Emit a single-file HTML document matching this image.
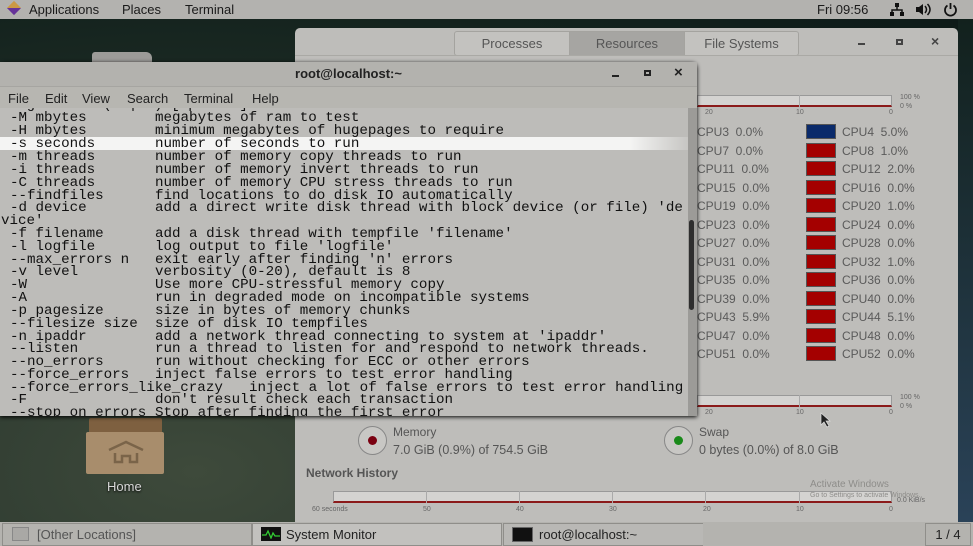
<!DOCTYPE html>
<html><head><meta charset="utf-8"><style>
*{margin:0;padding:0;box-sizing:border-box}
body{width:973px;height:546px;overflow:hidden;position:relative;background:#15251f;font-family:"Liberation Sans",sans-serif}
.a{position:absolute}
#top{left:0;top:0;width:973px;height:19px;background:#b3b2af;font-size:13px;color:#1a1a1a}
#top span{position:absolute;top:2px}
#desk{left:0;top:19px;width:973px;height:503px;background:radial-gradient(ellipse at 20% 90%,#3e4a3b 0%,#27342c 40%,#13221d 75%,#0d1a18 100%)}
#sm{left:295px;top:28px;width:663px;height:494px;background:#bebdba;border-radius:5px 5px 0 0}
.tab{position:absolute;top:3px;height:25px;border:1px solid #a4a39f;font-size:13px;color:#555;text-align:center;line-height:23px;background:#c3c2bf}
.lbl{font-size:12px;color:#5a5a5a;position:absolute}
.sm8{font-size:7px;color:#666;position:absolute}
.box{position:absolute;left:806px;width:30px;height:15px;background:#a40000;border:1px solid #555}
#term{left:0;top:62px;width:697px;height:354px;background:#bdbcb9;border-radius:5px 5px 0 0;box-shadow:0 1px 4px #000}
#tt{height:25px;background:#b3b2ae;font-size:13px;font-weight:bold;text-align:center;line-height:24px;color:#222;border-bottom:1px solid #a6a5a1}
#mn{height:21px;background:#b7b6b1;font-size:13px;color:#222}
#mn span{position:absolute;top:29px}
#txt{position:absolute;left:0;top:46px;width:688px;height:308px;overflow:hidden;background:#bdbcb9;font-family:"Liberation Mono",monospace;font-size:14.2px;color:#111}
#txt div{position:absolute;height:13px;line-height:13px;white-space:pre;left:0;width:700px}
#txt b{font-weight:normal;position:absolute;left:10px;top:0}
#txt i{font-style:normal;position:absolute;left:155px;top:0}
#hl{position:absolute;left:0;top:29px;width:435px;height:14px;background:linear-gradient(90deg,#f4f4f3 0%,#f4f4f3 90%,rgba(244,244,243,0) 100%)}
#task{left:0;top:522px;width:973px;height:24px;background:#b4b3af}
.tb{position:absolute;top:1px;height:23px;border:1px solid #8f8e8a;font-size:13px;color:#222;line-height:21px}
</style></head><body>
<div id="top" class="a">
<span style="left:9px;top:3px;width:10px;height:10px;background:linear-gradient(135deg,#c94 0 50%,#639 50%);transform:rotate(45deg);"></span>
<span style="left:29px">Applications</span><span style="left:122px">Places</span><span style="left:185px">Terminal</span>
<span style="left:817px">Fri 09:56</span>
<svg class="a" style="left:890px;top:3px" width="14" height="13"><rect x="5" y="0" width="4" height="4" fill="#111"/><rect x="0" y="9" width="4" height="4" fill="#111"/><rect x="10" y="9" width="4" height="4" fill="#111"/><path d="M7 4v3M2 9V7h10v2" stroke="#111" stroke-width="1.5" fill="none"/></svg>
<svg class="a" style="left:916px;top:3px" width="16" height="13"><path d="M0 4h3l4-3v11l-4-3H0z" fill="#111"/><path d="M9 3q3 3.5 0 7M11.5 1q5 5.5 0 11" stroke="#111" stroke-width="1.5" fill="none"/></svg>
<svg class="a" style="left:943px;top:2px" width="15" height="15"><path d="M4.5 3.5a5.5 5.5 0 1 0 6 0" stroke="#111" stroke-width="1.8" fill="none"/><path d="M7.5 1v6" stroke="#111" stroke-width="1.8"/></svg>
</div>
<div id="desk" class="a"></div>
<div class="a" style="left:92px;top:52px;width:60px;height:12px;background:#9c9b98;border-radius:3px 6px 0 0"></div>
<div class="a" style="left:958px;top:19px;width:15px;height:503px;background:linear-gradient(#12211d,#2a4258)"></div>
<div class="a" style="left:89px;top:418px;width:73px;height:20px;background:#7e6040;border-radius:2px"></div>
<div class="a" style="left:86px;top:432px;width:78px;height:42px;background:#a88d6c;border-radius:2px"></div>
<svg class="a" style="left:106px;top:440px" width="40" height="25"><path d="M3 10L20 2 37 10M9 13v9h7v-6h8v6h7v-9" stroke="#7a6449" stroke-width="2.5" fill="none"/></svg>
<div class="a" style="left:107px;top:479px;font-size:13px;color:#d8d8d8;text-shadow:0 1px 2px #000">Home</div>

<div id="sm" class="a">
<div class="tab" style="left:159px;width:116px;border-radius:3px 0 0 3px">Processes</div>
<div class="tab" style="left:274px;width:116px;background:#a6a5a2">Resources</div>
<div class="tab" style="left:389px;width:115px;border-radius:0 3px 3px 0">File Systems</div>
<div class="a" style="left:563px;top:15px;width:7px;height:2px;background:#444"></div>
<div class="a" style="left:601px;top:11px;width:7px;height:6px;border:2px solid #444"></div>
<div class="a" style="left:636px;top:5px;font-size:14px;color:#444;font-weight:bold">×</div>
<div class="a" style="left:0;top:27px;width:663px;height:1px;background:#aaa9a5"></div>
</div>
<div class="a" style="left:697px;top:95px;width:195px;height:12px;background:#d4d3d1;border:1px solid #999;border-bottom:2px solid #8b1a1a"></div>
<div class="a" style="left:799px;top:95px;width:1px;height:12px;background:#aaa"></div>
<div class="sm8" style="left:900px;top:94px">100 %</div><div class="sm8" style="left:900px;top:103px">0 %</div>
<div class="sm8" style="left:705px;top:109px">20</div><div class="sm8" style="left:796px;top:109px">10</div><div class="sm8" style="left:889px;top:109px">0</div>
<div class="lbl" style="left:697px;top:123px;line-height:18.5px">CPU3&nbsp; 0.0%<br>CPU7&nbsp; 0.0%<br>CPU11&nbsp; 0.0%<br>CPU15&nbsp; 0.0%<br>CPU19&nbsp; 0.0%<br>CPU23&nbsp; 0.0%<br>CPU27&nbsp; 0.0%<br>CPU31&nbsp; 0.0%<br>CPU35&nbsp; 0.0%<br>CPU39&nbsp; 0.0%<br>CPU43&nbsp; 5.9%<br>CPU47&nbsp; 0.0%<br>CPU51&nbsp; 0.0%</div>
<div class="lbl" style="left:842px;top:123px;line-height:18.5px">CPU4&nbsp; 5.0%<br>CPU8&nbsp; 1.0%<br>CPU12&nbsp; 2.0%<br>CPU16&nbsp; 0.0%<br>CPU20&nbsp; 1.0%<br>CPU24&nbsp; 0.0%<br>CPU28&nbsp; 0.0%<br>CPU32&nbsp; 1.0%<br>CPU36&nbsp; 0.0%<br>CPU40&nbsp; 0.0%<br>CPU44&nbsp; 5.1%<br>CPU48&nbsp; 0.0%<br>CPU52&nbsp; 0.0%</div>
<div class="box" style="top:124px;background:#0a2a6a"></div>
<div class="box" style="top:142.5px"></div><div class="box" style="top:161px"></div><div class="box" style="top:179.5px"></div><div class="box" style="top:198px"></div><div class="box" style="top:216.5px"></div><div class="box" style="top:235px"></div><div class="box" style="top:253.5px"></div><div class="box" style="top:272px"></div><div class="box" style="top:290.5px"></div><div class="box" style="top:309px"></div><div class="box" style="top:327.5px"></div><div class="box" style="top:346px"></div>
<div class="a" style="left:697px;top:395px;width:195px;height:12px;background:#d4d3d1;border:1px solid #999;border-bottom:2px solid #8b1a1a"></div>
<div class="a" style="left:799px;top:395px;width:1px;height:12px;background:#aaa"></div>
<div class="sm8" style="left:900px;top:394px">100 %</div><div class="sm8" style="left:900px;top:403px">0 %</div>
<div class="sm8" style="left:705px;top:409px">20</div><div class="sm8" style="left:796px;top:409px">10</div><div class="sm8" style="left:889px;top:409px">0</div>
<svg class="a" style="left:820px;top:412px" width="12" height="16"><path d="M1 1v12l3-3 3 5 2-1-3-5h4z" fill="#222" stroke="#ddd" stroke-width=".7"/></svg>
<div class="a" style="left:358px;top:426px;width:29px;height:29px;border-radius:50%;border:1px solid #888;background:#c8c7c4"></div>
<div class="a" style="left:368px;top:436px;width:9px;height:9px;border-radius:50%;background:#7a0010"></div>
<div class="a" style="left:664px;top:426px;width:29px;height:29px;border-radius:50%;border:1px solid #888;background:#c8c7c4"></div>
<div class="a" style="left:674px;top:436px;width:9px;height:9px;border-radius:50%;background:#1a8a1a"></div>
<div class="a" style="left:393px;top:425px;font-size:12px;color:#555">Memory</div>
<div class="a" style="left:393px;top:443px;font-size:12.5px;color:#555">7.0 GiB (0.9%) of 754.5 GiB</div>
<div class="a" style="left:699px;top:425px;font-size:12px;color:#555">Swap</div>
<div class="a" style="left:699px;top:443px;font-size:12.5px;color:#555">0 bytes (0.0%) of 8.0 GiB</div>
<div class="a" style="left:306px;top:466px;font-size:12px;font-weight:bold;color:#555">Network History</div>
<div class="a" style="left:333px;top:491px;width:559px;height:12px;background:#d4d3d1;border:1px solid #999;border-bottom:2px solid #8b1a1a"></div>
<div class="a" style="left:426px;top:491px;width:1px;height:12px;background:#aaa"></div><div class="a" style="left:519px;top:491px;width:1px;height:12px;background:#aaa"></div><div class="a" style="left:612px;top:491px;width:1px;height:12px;background:#aaa"></div><div class="a" style="left:705px;top:491px;width:1px;height:12px;background:#aaa"></div><div class="a" style="left:799px;top:491px;width:1px;height:12px;background:#aaa"></div>
<div class="sm8" style="left:312px;top:506px">60 seconds</div><div class="sm8" style="left:423px;top:506px">50</div><div class="sm8" style="left:516px;top:506px">40</div><div class="sm8" style="left:609px;top:506px">30</div><div class="sm8" style="left:703px;top:506px">20</div><div class="sm8" style="left:796px;top:506px">10</div><div class="sm8" style="left:889px;top:506px">0</div>
<div class="sm8" style="left:897px;top:497px">0.0 KiB/s</div>
<div class="a" style="left:810px;top:479px;font-size:10px;color:#8e8d8a">Activate Windows</div>
<div class="a" style="left:810px;top:492px;font-size:7px;color:#8e8d8a">Go to Settings to activate Windows.</div>

<div id="term" class="a">
<div id="tt">root@localhost:~</div>
<div class="a" style="left:612px;top:13px;width:7px;height:2px;background:#222"></div>
<div class="a" style="left:644px;top:8px;width:7px;height:6px;border:2px solid #222"></div>
<div class="a" style="left:674px;top:2px;font-size:15px;color:#222;font-weight:bold">×</div>
<div id="mn"><span style="left:8px">File</span><span style="left:45px">Edit</span><span style="left:82px">View</span><span style="left:127px">Search</span><span style="left:184px">Terminal</span><span style="left:252px">Help</span></div>
<div id="txt"><div id="hl"></div>
<div style="top:-9px"><b style="left:1px">usage: ./sat(32|64) [options]</b></div>
<div style="top:4px"><b>-M mbytes</b><i>megabytes of ram to test</i></div>
<div style="top:17px"><b>-H mbytes</b><i>minimum megabytes of hugepages to require</i></div>
<div style="top:30px"><b>-s seconds</b><i>number of seconds to run</i></div>
<div style="top:43px"><b>-m threads</b><i>number of memory copy threads to run</i></div>
<div style="top:56px"><b>-i threads</b><i>number of memory invert threads to run</i></div>
<div style="top:69px"><b>-C threads</b><i>number of memory CPU stress threads to run</i></div>
<div style="top:82px"><b>--findfiles</b><i>find locations to do disk IO automatically</i></div>
<div style="top:94px"><b>-d device</b><i>add a direct write disk thread with block device (or file) 'de</i></div>
<div style="top:107px"><b style="left:1px">vice'</b></div>
<div style="top:120px"><b>-f filename</b><i>add a disk thread with tempfile 'filename'</i></div>
<div style="top:133px"><b>-l logfile</b><i>log output to file 'logfile'</i></div>
<div style="top:146px"><b>--max_errors n</b><i>exit early after finding 'n' errors</i></div>
<div style="top:158px"><b>-v level</b><i>verbosity (0-20), default is 8</i></div>
<div style="top:171px"><b>-W</b><i>Use more CPU-stressful memory copy</i></div>
<div style="top:184px"><b>-A</b><i>run in degraded mode on incompatible systems</i></div>
<div style="top:197px"><b>-p pagesize</b><i>size in bytes of memory chunks</i></div>
<div style="top:210px"><b>--filesize size</b><i>size of disk IO tempfiles</i></div>
<div style="top:223px"><b>-n ipaddr</b><i>add a network thread connecting to system at 'ipaddr'</i></div>
<div style="top:235px"><b>--listen</b><i>run a thread to listen for and respond to network threads.</i></div>
<div style="top:248px"><b>--no_errors</b><i>run without checking for ECC or other errors</i></div>
<div style="top:261px"><b>--force_errors</b><i>inject false errors to test error handling</i></div>
<div style="top:274px"><b>--force_errors_like_crazy</b><i style="left:249px">inject a lot of false errors to test error handling</i></div>
<div style="top:286px"><b>-F</b><i>don't result check each transaction</i></div>
<div style="top:299px"><b>--stop_on_errors</b><i>Stop after finding the first error</i></div>
</div>
<div class="a" style="left:688px;top:46px;width:9px;height:308px;background:#9c9b98"></div>
<div class="a" style="left:689px;top:158px;width:5px;height:90px;background:#2e2e2e;border-radius:3px"></div>
</div>

<div id="task" class="a">
<div class="tb" style="left:2px;width:250px;color:#555"><span style="position:absolute;left:9px;top:3px;width:17px;height:14px;background:#a9a8a5;border:1px solid #888"></span><span style="position:absolute;left:34px">[Other Locations]</span></div>
<div class="tb" style="left:252px;width:250px;background:#c2c1be"><span style="position:absolute;left:8px;top:3px;width:20px;height:14px;background:#111"></span><svg style="position:absolute;left:9px;top:5px" width="18" height="10"><path d="M0 6h4l2-4 3 7 2-5 2 3h5" stroke="#3c3" fill="none" stroke-width="1.3"/></svg><span style="position:absolute;left:33px">System Monitor</span></div>
<div class="tb" style="left:503px;width:200px;border-right:none;background:#b9b8b5"><span style="position:absolute;left:8px;top:3px;width:21px;height:15px;background:#111;border:1px solid #666"></span><span style="position:absolute;left:35px">root@localhost:~</span></div>
<div class="tb" style="left:925px;width:46px;text-align:center">1 / 4</div>
</div>
</body></html>
